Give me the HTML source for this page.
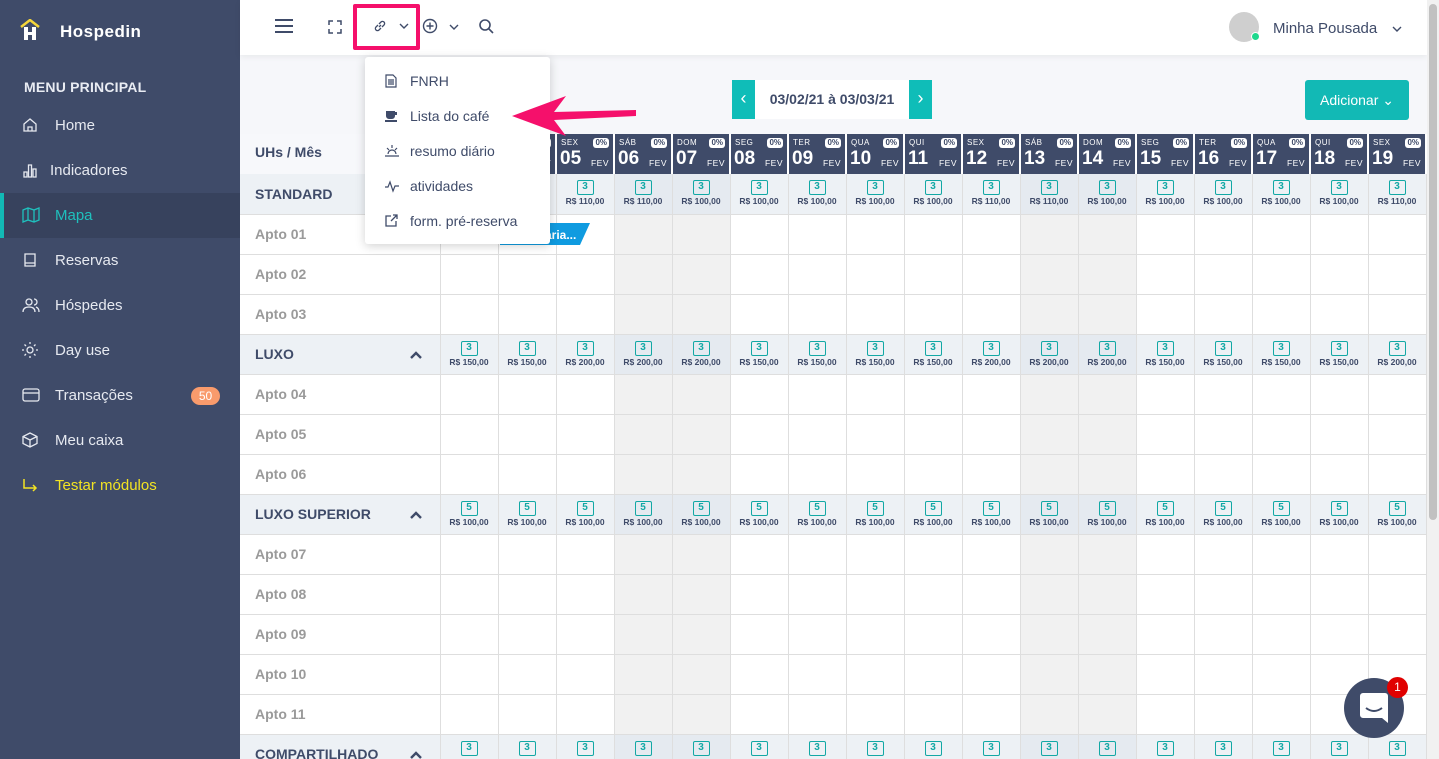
<!DOCTYPE html>
<html><head><meta charset="utf-8">
<style>
*{box-sizing:border-box;margin:0;padding:0}
html,body{width:1439px;height:759px;overflow:hidden}
body{background:#f6f7fa;font-family:"Liberation Sans",sans-serif;position:relative;color:#3f4b69}
.sb{position:absolute;left:0;top:0;width:240px;height:759px;background:#3f4b69}
.logo{position:absolute;left:20px;top:19px;color:#fff;font-weight:bold;font-size:17px;letter-spacing:.5px}
.logo span{margin-left:20px}
.mp{position:absolute;left:24px;top:79px;color:#e9ecf3;font-size:14px;font-weight:bold;letter-spacing:.2px}
.it{position:absolute;left:0;width:240px;height:45px;line-height:45px;color:#e6e9f0;font-size:15px;padding-left:55px}
.it svg{position:absolute;left:22px;top:14px}
.act{background:#37425d;color:#1fc0bd;border-left:4px solid #12b9b5;padding-left:51px}
.act svg{left:18px}
.badge{position:absolute;left:191px;top:14px;width:29px;height:18px;border-radius:9px;background:#f99b6c;color:#fff;font-size:12px;line-height:18px;text-align:center}
.top{position:absolute;left:240px;top:0;width:1187px;height:55px;background:#fff;box-shadow:0 2px 6px rgba(0,0,0,.06)}
table{position:absolute;left:240px;top:134px;border-collapse:collapse;table-layout:fixed;width:1186px}
tr{height:40px}
td{height:40px;padding:0;border:1px solid #dedede;background:#fff;text-align:center;vertical-align:top;overflow:hidden}
td.w{background:#f1f1f1}
td.n{text-align:left;padding-left:15px;color:#9a9a9a;font-weight:bold;font-size:14px;line-height:38px;border-left:none;vertical-align:middle}
tr.c td{background:#edf1f5;border-left:none;border-top:none;border-bottom:none;border-right:1px solid #dedede}
tr.c td.w{background:#e5eaf0}
tr.c td.n{color:#3f4b69;position:relative}
.up{position:absolute;right:17px;top:15px}
.bx{display:inline-block;margin-top:6px;width:17px;height:15px;border:1.5px solid #12a8a5;border-radius:2px;color:#12a8a5;font-size:10px;line-height:12px;font-weight:bold}
.pr{font-size:8.5px;font-weight:bold;color:#3f4b69;margin-top:1px;white-space:nowrap}
tr.h td{background:#3f4b69;border:none;border-right:2px solid #fff;position:relative;color:#fff}
tr.h td.n0{background:#f7f8fb;color:#3f4b69;font-weight:bold;font-size:14px;text-align:left;padding-left:15px;line-height:36px;border-right:none}
.d{position:absolute;left:4px;top:4px;font-size:8px;letter-spacing:.5px}
.p{position:absolute;right:4px;top:4px;background:#fff;color:#3f4b69;font-size:8px;font-weight:bold;border-radius:3px;padding:0 2px;line-height:10px}
.nm{position:absolute;left:3px;top:14px;font-size:19px;font-weight:bold}
.m{position:absolute;right:4px;top:24px;font-size:8.5px;letter-spacing:.5px}
.dd{position:absolute;left:365px;top:57px;width:185px;height:187px;background:#fff;box-shadow:0 2px 10px rgba(0,0,0,.18);border-radius:3px}
.di{position:absolute;left:45px;font-size:14px;color:#3f4b69}
.di svg{position:absolute;left:-25px;top:1px}
</style></head><body>
<div class="sb">
<div class="logo"><svg width="20" height="22" viewBox="0 0 20 22" style="vertical-align:-4px"><path d="M1 8 L10 1 L19 8" fill="none" stroke="#f5d63a" stroke-width="2.5"/><path d="M4 8h4v5h4V8h4v13h-4v-5H8v5H4z" fill="#fff"/></svg><span>Hospedin</span></div>
<div class="mp">MENU PRINCIPAL</div>
<div class="it" style="top:103px"><svg width="16" height="16" viewBox="0 0 16 16" fill="none" stroke="#e6e9f0" stroke-width="1.3"><path d="M2 7L8 2l6 5v7H2z M6 14v-4h4v4"/></svg>Home</div>
<div class="it" style="top:148px;padding-left:50px"><svg width="16" height="16" viewBox="0 0 16 16" fill="none" stroke="#e6e9f0" stroke-width="1.3"><path d="M2 10h3v5H2zM6.5 3h3v12h-3zM11 7h3v8h-3z"/></svg>Indicadores</div>
<div class="it act" style="top:193px"><svg width="18" height="16" viewBox="0 0 18 16" fill="none" stroke="#1fc0bd" stroke-width="1.3"><path d="M1 3l5-2 6 2 5-2v12l-5 2-6-2-5 2zM6 1v12M12 3v12"/></svg>Mapa</div>
<div class="it" style="top:238px"><svg width="16" height="16" viewBox="0 0 16 16" fill="none" stroke="#e6e9f0" stroke-width="1.3"><path d="M3 2h10v12H3zM3 11h10"/></svg>Reservas</div>
<div class="it" style="top:283px"><svg width="18" height="16" viewBox="0 0 18 16" fill="none" stroke="#e6e9f0" stroke-width="1.3"><circle cx="7" cy="5" r="3"/><path d="M1 15c0-4 3-5 6-5s6 1 6 5M12 2a3 3 0 010 6M14 10c2 1 3 2 3 5"/></svg>Hóspedes</div>
<div class="it" style="top:328px"><svg width="16" height="16" viewBox="0 0 16 16" fill="none" stroke="#e6e9f0" stroke-width="1.3"><circle cx="8" cy="8" r="3"/><path d="M8 0v2M8 14v2M0 8h2M14 8h2M2.5 2.5l1.5 1.5M12 12l1.5 1.5M2.5 13.5L4 12M12 4l1.5-1.5"/></svg>Day use</div>
<div class="it" style="top:373px"><svg width="18" height="16" viewBox="0 0 18 16" fill="none" stroke="#e6e9f0" stroke-width="1.3"><rect x="1" y="2" width="16" height="12" rx="2"/><path d="M1 6h16"/></svg>Transações<div class="badge">50</div></div>
<div class="it" style="top:418px"><svg width="16" height="16" viewBox="0 0 16 16" fill="none" stroke="#e6e9f0" stroke-width="1.3"><path d="M8 1l7 3.5v7L8 15l-7-3.5v-7zM1 4.5L8 8l7-3.5M8 8v7"/></svg>Meu caixa</div>
<div class="it" style="top:463px;color:#f2e323"><svg width="16" height="16" viewBox="0 0 16 16" fill="none" stroke="#f2e323" stroke-width="1.5"><path d="M2 2v9h12M11 8l3 3-3 3"/></svg>Testar módulos</div>
</div>
<div class="top">
<svg style="position:absolute;left:34px;top:18px" width="20" height="16" viewBox="0 0 20 16" stroke="#3f4b69" stroke-width="2"><path d="M1 2h18M1 8h18M1 14h18"/></svg>
<svg style="position:absolute;left:88px;top:20px" width="14" height="14" viewBox="0 0 14 14" fill="none" stroke="#3f4b69" stroke-width="1.5"><path d="M1 5V1h4M9 1h4v4M13 9v4H9M5 13H1V9"/></svg>
<svg style="position:absolute;left:133px;top:19px" width="14" height="14" viewBox="0 0 14 14" fill="none" stroke="#3f4b69" stroke-width="1.3"><path d="M6 8l2-2M5 6L3 8a2 2 0 003 3l2-2M9 8l2-2a2 2 0 00-3-3L6 5"/></svg>
<svg style="position:absolute;left:159px;top:23px" width="10" height="7" viewBox="0 0 10 7" fill="none" stroke="#3f4b69" stroke-width="1.4"><path d="M1 1l4 4 4-4"/></svg>
<svg style="position:absolute;left:182px;top:18px" width="16" height="16" viewBox="0 0 16 16" fill="none" stroke="#3f4b69" stroke-width="1.4"><circle cx="8" cy="8" r="6.5"/><path d="M8 4.5v7M4.5 8h7"/></svg>
<svg style="position:absolute;left:209px;top:24px" width="10" height="7" viewBox="0 0 10 7" fill="none" stroke="#3f4b69" stroke-width="1.4"><path d="M1 1l4 4 4-4"/></svg>
<svg style="position:absolute;left:238px;top:18px" width="16" height="16" viewBox="0 0 16 16" fill="none" stroke="#3f4b69" stroke-width="1.6"><circle cx="7" cy="7" r="5"/><path d="M11 11l4 4"/></svg>
<div style="position:absolute;left:989px;top:12px;width:30px;height:30px;border-radius:50%;background:#cfcfcf"></div>
<div style="position:absolute;left:1011px;top:32px;width:9px;height:9px;border-radius:50%;background:#1ed88d;border:1px solid #fff"></div>
<div style="position:absolute;left:1033px;top:20px;font-size:15px;color:#3f4b69">Minha Pousada</div>
<svg style="position:absolute;left:1152px;top:26px" width="10" height="7" viewBox="0 0 10 7" fill="none" stroke="#3f4b69" stroke-width="1.4"><path d="M1 1l4 4 4-4"/></svg>
</div>
<div style="position:absolute;left:353px;top:4px;width:67px;height:46px;border:4px solid #f5106b;border-radius:2px"></div>
<div style="position:absolute;left:732px;top:80px;width:23px;height:39px;background:#0fbdb8;color:#fff;font-size:18px;text-align:center;line-height:37px">‹</div>
<div style="position:absolute;left:755px;top:80px;width:154px;height:39px;background:#fff;font-weight:bold;font-size:14px;text-align:center;line-height:39px">03/02/21 à 03/03/21</div>
<div style="position:absolute;left:909px;top:80px;width:23px;height:39px;background:#0fbdb8;color:#fff;font-size:18px;text-align:center;line-height:37px">›</div>
<div style="position:absolute;left:1305px;top:80px;width:104px;height:40px;background:#12b9b5;border-radius:3px;color:#fff;font-size:14px;text-align:center;line-height:40px">Adicionar ⌄</div>
<table>
<colgroup><col style="width:200px"><col span="17" style="width:58px"></colgroup>
<tr class="h"><td class="n0">UHs / Mês</td>
<td><span class="d">QUA</span><span class="p">0%</span><span class="nm">03</span><span class="m">FEV</span></td>
<td><span class="d">QUI</span><span class="p">0%</span><span class="nm">04</span><span class="m">FEV</span></td>
<td><span class="d">SEX</span><span class="p">0%</span><span class="nm">05</span><span class="m">FEV</span></td>
<td><span class="d">SÁB</span><span class="p">0%</span><span class="nm">06</span><span class="m">FEV</span></td>
<td><span class="d">DOM</span><span class="p">0%</span><span class="nm">07</span><span class="m">FEV</span></td>
<td><span class="d">SEG</span><span class="p">0%</span><span class="nm">08</span><span class="m">FEV</span></td>
<td><span class="d">TER</span><span class="p">0%</span><span class="nm">09</span><span class="m">FEV</span></td>
<td><span class="d">QUA</span><span class="p">0%</span><span class="nm">10</span><span class="m">FEV</span></td>
<td><span class="d">QUI</span><span class="p">0%</span><span class="nm">11</span><span class="m">FEV</span></td>
<td><span class="d">SEX</span><span class="p">0%</span><span class="nm">12</span><span class="m">FEV</span></td>
<td><span class="d">SÁB</span><span class="p">0%</span><span class="nm">13</span><span class="m">FEV</span></td>
<td><span class="d">DOM</span><span class="p">0%</span><span class="nm">14</span><span class="m">FEV</span></td>
<td><span class="d">SEG</span><span class="p">0%</span><span class="nm">15</span><span class="m">FEV</span></td>
<td><span class="d">TER</span><span class="p">0%</span><span class="nm">16</span><span class="m">FEV</span></td>
<td><span class="d">QUA</span><span class="p">0%</span><span class="nm">17</span><span class="m">FEV</span></td>
<td><span class="d">QUI</span><span class="p">0%</span><span class="nm">18</span><span class="m">FEV</span></td>
<td><span class="d">SEX</span><span class="p">0%</span><span class="nm">19</span><span class="m">FEV</span></td></tr>
<tr class="c"><td class="n">STANDARD</td>
<td><div class="bx">3</div><div class="pr">R$ 100,00</div></td><td><div class="bx">3</div><div class="pr">R$ 100,00</div></td><td><div class="bx">3</div><div class="pr">R$ 110,00</div></td><td class="w"><div class="bx">3</div><div class="pr">R$ 110,00</div></td><td class="w"><div class="bx">3</div><div class="pr">R$ 100,00</div></td><td><div class="bx">3</div><div class="pr">R$ 100,00</div></td><td><div class="bx">3</div><div class="pr">R$ 100,00</div></td><td><div class="bx">3</div><div class="pr">R$ 100,00</div></td><td><div class="bx">3</div><div class="pr">R$ 100,00</div></td><td><div class="bx">3</div><div class="pr">R$ 110,00</div></td><td class="w"><div class="bx">3</div><div class="pr">R$ 110,00</div></td><td class="w"><div class="bx">3</div><div class="pr">R$ 100,00</div></td><td><div class="bx">3</div><div class="pr">R$ 100,00</div></td><td><div class="bx">3</div><div class="pr">R$ 100,00</div></td><td><div class="bx">3</div><div class="pr">R$ 100,00</div></td><td><div class="bx">3</div><div class="pr">R$ 100,00</div></td><td><div class="bx">3</div><div class="pr">R$ 110,00</div></td></tr>
<tr><td class="n">Apto 01</td><td></td><td></td><td></td><td class="w"></td><td class="w"></td><td></td><td></td><td></td><td></td><td></td><td class="w"></td><td class="w"></td><td></td><td></td><td></td><td></td><td></td></tr>
<tr><td class="n">Apto 02</td><td></td><td></td><td></td><td class="w"></td><td class="w"></td><td></td><td></td><td></td><td></td><td></td><td class="w"></td><td class="w"></td><td></td><td></td><td></td><td></td><td></td></tr>
<tr><td class="n">Apto 03</td><td></td><td></td><td></td><td class="w"></td><td class="w"></td><td></td><td></td><td></td><td></td><td></td><td class="w"></td><td class="w"></td><td></td><td></td><td></td><td></td><td></td></tr>
<tr class="c"><td class="n">LUXO<svg class="up" width="14" height="9" viewBox="0 0 14 9" fill="none" stroke="#3f4b69" stroke-width="2.4"><path d="M2 8l5-5 5 5"/></svg></td>
<td><div class="bx">3</div><div class="pr">R$ 150,00</div></td><td><div class="bx">3</div><div class="pr">R$ 150,00</div></td><td><div class="bx">3</div><div class="pr">R$ 200,00</div></td><td class="w"><div class="bx">3</div><div class="pr">R$ 200,00</div></td><td class="w"><div class="bx">3</div><div class="pr">R$ 200,00</div></td><td><div class="bx">3</div><div class="pr">R$ 150,00</div></td><td><div class="bx">3</div><div class="pr">R$ 150,00</div></td><td><div class="bx">3</div><div class="pr">R$ 150,00</div></td><td><div class="bx">3</div><div class="pr">R$ 150,00</div></td><td><div class="bx">3</div><div class="pr">R$ 200,00</div></td><td class="w"><div class="bx">3</div><div class="pr">R$ 200,00</div></td><td class="w"><div class="bx">3</div><div class="pr">R$ 200,00</div></td><td><div class="bx">3</div><div class="pr">R$ 150,00</div></td><td><div class="bx">3</div><div class="pr">R$ 150,00</div></td><td><div class="bx">3</div><div class="pr">R$ 150,00</div></td><td><div class="bx">3</div><div class="pr">R$ 150,00</div></td><td><div class="bx">3</div><div class="pr">R$ 200,00</div></td></tr>
<tr><td class="n">Apto 04</td><td></td><td></td><td></td><td class="w"></td><td class="w"></td><td></td><td></td><td></td><td></td><td></td><td class="w"></td><td class="w"></td><td></td><td></td><td></td><td></td><td></td></tr>
<tr><td class="n">Apto 05</td><td></td><td></td><td></td><td class="w"></td><td class="w"></td><td></td><td></td><td></td><td></td><td></td><td class="w"></td><td class="w"></td><td></td><td></td><td></td><td></td><td></td></tr>
<tr><td class="n">Apto 06</td><td></td><td></td><td></td><td class="w"></td><td class="w"></td><td></td><td></td><td></td><td></td><td></td><td class="w"></td><td class="w"></td><td></td><td></td><td></td><td></td><td></td></tr>
<tr class="c"><td class="n">LUXO SUPERIOR<svg class="up" width="14" height="9" viewBox="0 0 14 9" fill="none" stroke="#3f4b69" stroke-width="2.4"><path d="M2 8l5-5 5 5"/></svg></td>
<td><div class="bx">5</div><div class="pr">R$ 100,00</div></td><td><div class="bx">5</div><div class="pr">R$ 100,00</div></td><td><div class="bx">5</div><div class="pr">R$ 100,00</div></td><td class="w"><div class="bx">5</div><div class="pr">R$ 100,00</div></td><td class="w"><div class="bx">5</div><div class="pr">R$ 100,00</div></td><td><div class="bx">5</div><div class="pr">R$ 100,00</div></td><td><div class="bx">5</div><div class="pr">R$ 100,00</div></td><td><div class="bx">5</div><div class="pr">R$ 100,00</div></td><td><div class="bx">5</div><div class="pr">R$ 100,00</div></td><td><div class="bx">5</div><div class="pr">R$ 100,00</div></td><td class="w"><div class="bx">5</div><div class="pr">R$ 100,00</div></td><td class="w"><div class="bx">5</div><div class="pr">R$ 100,00</div></td><td><div class="bx">5</div><div class="pr">R$ 100,00</div></td><td><div class="bx">5</div><div class="pr">R$ 100,00</div></td><td><div class="bx">5</div><div class="pr">R$ 100,00</div></td><td><div class="bx">5</div><div class="pr">R$ 100,00</div></td><td><div class="bx">5</div><div class="pr">R$ 100,00</div></td></tr>
<tr><td class="n">Apto 07</td><td></td><td></td><td></td><td class="w"></td><td class="w"></td><td></td><td></td><td></td><td></td><td></td><td class="w"></td><td class="w"></td><td></td><td></td><td></td><td></td><td></td></tr>
<tr><td class="n">Apto 08</td><td></td><td></td><td></td><td class="w"></td><td class="w"></td><td></td><td></td><td></td><td></td><td></td><td class="w"></td><td class="w"></td><td></td><td></td><td></td><td></td><td></td></tr>
<tr><td class="n">Apto 09</td><td></td><td></td><td></td><td class="w"></td><td class="w"></td><td></td><td></td><td></td><td></td><td></td><td class="w"></td><td class="w"></td><td></td><td></td><td></td><td></td><td></td></tr>
<tr><td class="n">Apto 10</td><td></td><td></td><td></td><td class="w"></td><td class="w"></td><td></td><td></td><td></td><td></td><td></td><td class="w"></td><td class="w"></td><td></td><td></td><td></td><td></td><td></td></tr>
<tr><td class="n">Apto 11</td><td></td><td></td><td></td><td class="w"></td><td class="w"></td><td></td><td></td><td></td><td></td><td></td><td class="w"></td><td class="w"></td><td></td><td></td><td></td><td></td><td></td></tr>
<tr class="c"><td class="n">COMPARTILHADO<svg class="up" width="14" height="9" viewBox="0 0 14 9" fill="none" stroke="#3f4b69" stroke-width="2.4"><path d="M2 8l5-5 5 5"/></svg></td>
<td><div class="bx">3</div></td><td><div class="bx">3</div></td><td><div class="bx">3</div></td><td class="w"><div class="bx">3</div></td><td class="w"><div class="bx">3</div></td><td><div class="bx">3</div></td><td><div class="bx">3</div></td><td><div class="bx">3</div></td><td><div class="bx">3</div></td><td><div class="bx">3</div></td><td class="w"><div class="bx">3</div></td><td class="w"><div class="bx">3</div></td><td><div class="bx">3</div></td><td><div class="bx">3</div></td><td><div class="bx">3</div></td><td><div class="bx">3</div></td><td><div class="bx">3</div></td></tr>
</table>
<svg style="position:absolute;left:500px;top:223px" width="92" height="22"><polygon points="0,0 90,0 80,22 0,22" fill="#0f9be0"/><text x="35" y="16" fill="#fff" font-family="Liberation Sans" font-size="12" font-weight="bold">Maria...</text></svg>
<div class="dd">
<div class="di" style="top:16px"><svg width="12" height="14" viewBox="0 0 12 14" fill="none" stroke="#3f4b69" stroke-width="1.2"><path d="M1 1h7l3 3v9H1zM3 6h6M3 8h6M3 10h6"/></svg>FNRH</div>
<div class="di" style="top:51px"><svg width="14" height="13" viewBox="0 0 14 13"><path d="M1 2h9v5a3 3 0 01-3 3H4a3 3 0 01-3-3z M10 3h2v3h-2" fill="#3f4b69"/><rect x="0" y="11" width="12" height="2" fill="#3f4b69"/></svg>Lista do café</div>
<div class="di" style="top:86px"><svg width="14" height="14" viewBox="0 0 14 14" fill="none" stroke="#3f4b69" stroke-width="1.2"><path d="M3 10a4 4 0 018 0M7 1v3M2 4l2 2M12 4l-2 2M0 12h14"/></svg>resumo diário</div>
<div class="di" style="top:121px"><svg width="14" height="14" viewBox="0 0 14 14" fill="none" stroke="#3f4b69" stroke-width="1.2"><path d="M0 8h3l2-5 3 9 2-5h4"/></svg>atividades</div>
<div class="di" style="top:156px"><svg width="13" height="13" viewBox="0 0 13 13" fill="none" stroke="#3f4b69" stroke-width="1.3"><path d="M6 2H1v10h10V7M8 1h4v4M12 1L6 7"/></svg>form. pré-reserva</div>
</div>
<svg style="position:absolute;left:508px;top:92px" width="130" height="46"><polygon points="4,24 58,4 46,20 128,18 128,24 46,28 58,44" fill="#f5106b"/></svg>
<div style="position:absolute;left:1427px;top:0;width:12px;height:759px;background:#f1f1f1"></div>
<div style="position:absolute;left:1429px;top:4px;width:8px;height:516px;background:#c1c1c1;border-radius:4px"></div>
<div style="position:absolute;left:1344px;top:678px;width:60px;height:60px;border-radius:50%;background:#3f4b69"></div>
<svg style="position:absolute;left:1360px;top:693px" width="28" height="30" viewBox="0 0 28 30"><path d="M3 0h22a3 3 0 013 3v27l-6-5H3a3 3 0 01-3-3V3a3 3 0 013-3z" fill="#fff"/><path d="M6 15q8 6 16 0" fill="none" stroke="#3f4b69" stroke-width="2"/></svg>
<div style="position:absolute;left:1387px;top:677px;width:21px;height:21px;border-radius:50%;background:#e00000;color:#fff;font-size:12px;text-align:center;line-height:21px">1</div>
</body></html>
